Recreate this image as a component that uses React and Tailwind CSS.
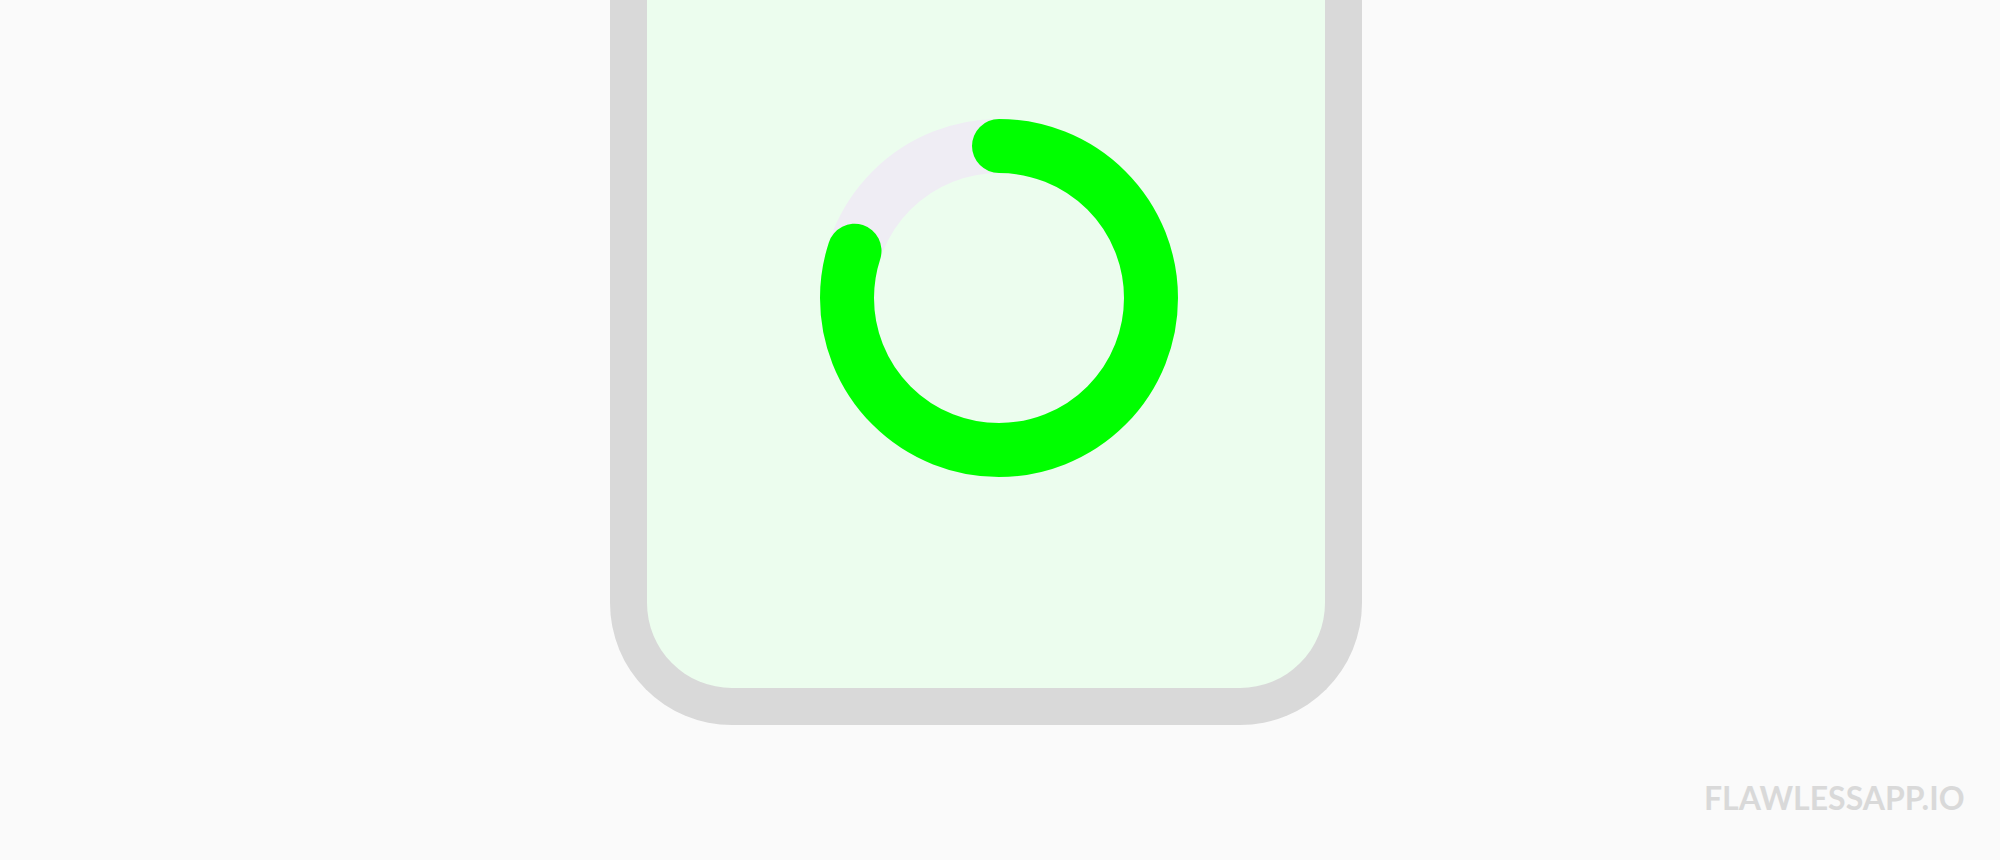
import React from "react";

// progress ring, 80% done
const RADIUS = 152;
const STROKE = 54;
const CIRC = 2 * Math.PI * RADIUS;
const PROGRESS = 0.8;

function ProgressRing() {
  const size = (RADIUS + STROKE / 2) * 2;
  const c = size / 2;
  return (
    <svg width={size} height={size} viewBox={`0 0 ${size} ${size}`} className="block">
      <circle cx={c} cy={c} r={RADIUS} fill="none" stroke="#efedf4" strokeWidth={STROKE} />
      <circle
        cx={c}
        cy={c}
        r={RADIUS}
        fill="none"
        stroke="#00ff00"
        strokeWidth={STROKE}
        strokeLinecap="round"
        strokeDasharray={`${CIRC * PROGRESS} ${CIRC}`}
        transform={`rotate(-90 ${c} ${c})`}
      />
    </svg>
  );
}

export default function App() {
  return (
    <div className="relative w-[2000px] h-[860px] bg-[#fafafa] overflow-hidden">
      {/* phone frame, top runs off screen */}
      <div className="ml-[610px] w-[752px] h-[725px] border-x-[37px] border-b-[37px] border-[#d9d9d9] rounded-b-[122px] bg-[#ecfdee]">
        <div className="pl-[173px] pt-[119px]">
          <ProgressRing />
        </div>
      </div>

      <span className="absolute left-[1704px] top-[782px] font-['Lato',sans-serif] font-bold text-[32px] leading-none text-[#d9d9d9]">
        FLAWLESSAPP.IO
      </span>
    </div>
  );
}
